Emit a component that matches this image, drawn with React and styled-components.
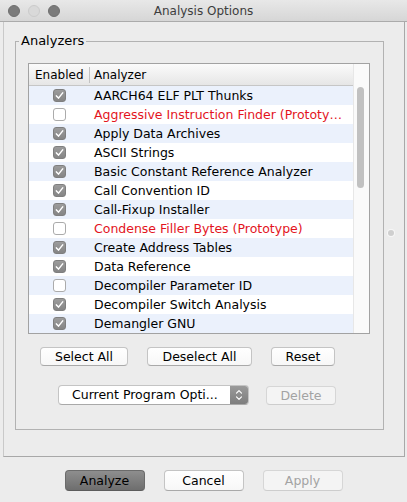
import React from 'react'
import styled, { createGlobalStyle } from 'styled-components'

const GlobalStyle = createGlobalStyle`
  html, body {
    margin: 0;
    padding: 0;
    background: #ececec;
  }
  body {
    font-family: "DejaVu Sans", "Noto Sans", sans-serif;
    color: #000;
  }
`

const analyzers = [
  { name: 'AARCH64 ELF PLT Thunks', enabled: true },
  { name: 'Aggressive Instruction Finder (Prototype)', enabled: false, proto: true },
  { name: 'Apply Data Archives', enabled: true },
  { name: 'ASCII Strings', enabled: true },
  { name: 'Basic Constant Reference Analyzer', enabled: true },
  { name: 'Call Convention ID', enabled: true },
  { name: 'Call-Fixup Installer', enabled: true },
  { name: 'Condense Filler Bytes (Prototype)', enabled: false, proto: true },
  { name: 'Create Address Tables', enabled: true },
  { name: 'Data Reference', enabled: true },
  { name: 'Decompiler Parameter ID', enabled: false },
  { name: 'Decompiler Switch Analysis', enabled: true },
  { name: 'Demangler GNU', enabled: true },
]

const Checkbox = ({ checked }) => (
  <Check $checked={checked}>
    {checked && (
      <svg width="13" height="13" viewBox="0 0 13 13">
        <path d="M3.4 6.9 L5.5 9.1 L9.7 3.9" fill="none" stroke="#fff" strokeWidth="1.5" strokeLinecap="round" strokeLinejoin="round" />
      </svg>
    )}
  </Check>
)

const App = () => {
  return (
    <Window>
      <GlobalStyle />
      <TitleBar>
        <Lights>
          <Light />
          <Light $light />
          <Light />
        </Lights>
        <Title>Analysis Options</Title>
        <span />
      </TitleBar>

      <Panel>
        <Group>
          <Legend>Analyzers</Legend>
          <TableBox>
            <TableMain>
              <HeaderRow>
                <HeaderCell $first>Enabled</HeaderCell>
                <HeaderCell>Analyzer</HeaderCell>
              </HeaderRow>
              {analyzers.map((a, i) => (
                <Row key={a.name} $odd={i % 2 === 1}>
                  <CheckCell>
                    <Checkbox checked={a.enabled} />
                  </CheckCell>
                  <NameCell $proto={a.proto}>{a.name}</NameCell>
                </Row>
              ))}
            </TableMain>
            <ScrollTrack>
              <Thumb />
            </ScrollTrack>
          </TableBox>

          <ButtonRow>
            <Button $width={88}>Select All</Button>
            <Button $width={105}>Deselect All</Button>
            <Button $width={64}>Reset</Button>
          </ButtonRow>

          <OptionsRow>
            <Select>
              <SelectText>Current Program Opti...</SelectText>
              <Stepper>
                <svg width="18" height="20" viewBox="0 0 18 20">
                  <path d="M6.5 8.2 L9 5.7 L11.5 8.2" fill="none" stroke="#fff" strokeWidth="1.2" strokeLinecap="round" strokeLinejoin="round" />
                  <path d="M6.5 11.8 L9 14.3 L11.5 11.8" fill="none" stroke="#fff" strokeWidth="1.2" strokeLinecap="round" strokeLinejoin="round" />
                </svg>
              </Stepper>
            </Select>
            <Button $width={70} disabled>Delete</Button>
          </OptionsRow>
        </Group>
        <Divider>
          <Handle />
        </Divider>
      </Panel>

      <Footer>
        <Button $width={80} $height={21} $default>Analyze</Button>
        <Button $width={80} $height={21}>Cancel</Button>
        <Button $width={80} $height={21} disabled>Apply</Button>
      </Footer>
    </Window>
  )
}

export default App

const Window = styled.div`
  width: 407px;
  height: 502px;
  display: flex;
  flex-direction: column;
  background: #ececec;
  overflow: hidden;
`

const TitleBar = styled.div`
  height: 21px;
  flex-shrink: 0;
  display: grid;
  grid-template-columns: 1fr auto 1fr;
  align-items: center;
  background: linear-gradient(#e8e8e8, #d6d6d6);
  border-bottom: 1px solid #ababab;
`

const Lights = styled.div`
  display: flex;
  gap: 8px;
  padding-left: 8px;
`

const Light = styled.div`
  width: 12px;
  height: 12px;
  border-radius: 50%;
  box-sizing: border-box;
  background: ${p => (p.$light ? '#d9d9d9' : '#7b7b7b')};
  border: 1px solid ${p => (p.$light ? '#cbcbcb' : '#6f6f6f')};
`

const Title = styled.div`
  font-size: 12px;
  color: #3d3d3d;
`

const Panel = styled.div`
  height: 435px;
  flex-shrink: 0;
  margin: 0 2px 0 3px;
  display: flex;
  border-left: 1px solid #c9c9c9;
  border-right: 1px solid #a8a8a8;
  border-bottom: 1px solid #a8a8a8;
  box-sizing: border-box;
`

const Group = styled.fieldset`
  width: 369px;
  height: 397px;
  box-sizing: border-box;
  margin: 11px 0 0 11px;
  padding: 14px 13px 0 12px;
  border: 1px solid #b2b2b2;
  min-width: 0;
`

const Legend = styled.legend`
  font-size: 13px;
  line-height: 16px;
  padding: 0 2px;
  margin-left: -9px;
  color: #000;
`

const TableBox = styled.div`
  height: 271px;
  box-sizing: border-box;
  border: 1px solid #a2a2a2;
  background: #fff;
  display: flex;
  overflow: hidden;
`

const TableMain = styled.div`
  width: 324px;
  display: flex;
  flex-direction: column;
`

const HeaderRow = styled.div`
  height: 21px;
  flex-shrink: 0;
  display: flex;
  align-items: center;
  background: linear-gradient(#fbfbfb, #e6e6e6);
  border-bottom: 1px solid #c6c6c6;
`

const HeaderCell = styled.div`
  font-size: 12px;
  line-height: 16px;
  padding-left: ${p => (p.$first ? '6px' : '4px')};
  width: ${p => (p.$first ? '61px' : 'auto')};
  box-sizing: border-box;
  border-right: ${p => (p.$first ? '1px solid #c2c2c2' : 'none')};
`

const Row = styled.div`
  height: 19px;
  flex-shrink: 0;
  display: flex;
  align-items: center;
  background: ${p => (p.$odd ? '#ffffff' : '#ebf1fc')};
`

const CheckCell = styled.div`
  width: 61px;
  display: flex;
  justify-content: center;
`

const Check = styled.div`
  width: 13px;
  height: 13px;
  box-sizing: border-box;
  border-radius: 3px;
  display: flex;
  align-items: center;
  justify-content: center;
  background: ${p => (p.$checked ? 'linear-gradient(#9c9c9c, #858585)' : '#fff')};
  border: 1px solid ${p => (p.$checked ? '#7f7f7f' : '#ababab')};
  svg {
    margin: -1px;
  }
`

const NameCell = styled.div`
  flex: 1;
  min-width: 0;
  padding: 0 4px;
  font-size: 12.5px;
  white-space: nowrap;
  overflow: hidden;
  text-overflow: ellipsis;
  color: ${p => (p.$proto ? '#e3141d' : '#000')};
`

const ScrollTrack = styled.div`
  flex: 1;
  display: flex;
  flex-direction: column;
  padding-top: 23px;
  background: #fafafa;
  border-left: 1px solid #e7e7e7;
`

const Thumb = styled.div`
  width: 7px;
  height: 101px;
  margin-left: 3px;
  border-radius: 4px;
  background: #c1c1c1;
`

const Button = styled.button`
  width: ${p => p.$width}px;
  height: ${p => p.$height || 19}px;
  box-sizing: border-box;
  padding: 0;
  font-family: "DejaVu Sans", "Noto Sans", sans-serif;
  font-size: 12.5px;
  border-radius: 4px;
  color: ${p => (p.disabled ? '#a3a3a3' : '#000')};
  background: ${p =>
    p.$default
      ? 'linear-gradient(#8e8e8e, #6e6e6e)'
      : p.disabled
      ? '#f4f4f4'
      : 'linear-gradient(#ffffff, #f7f7f7)'};
  border: 1px solid ${p => (p.$default ? '#6b6b6b' : p.disabled ? '#d6d6d6' : '#c4c4c4')};
  border-bottom-color: ${p => (p.$default ? '#5c5c5c' : p.disabled ? '#cdcdcd' : '#a9a9a9')};
`

const ButtonRow = styled.div`
  display: flex;
  gap: 19px;
  margin: 13px 0 0 12px;
`

const OptionsRow = styled.div`
  display: flex;
  align-items: center;
  gap: 17px;
  margin: 19px 0 0 30px;
`

const Select = styled.div`
  width: 191px;
  height: 20px;
  box-sizing: border-box;
  display: flex;
  border: 1px solid #c4c4c4;
  border-bottom-color: #a9a9a9;
  border-radius: 4px;
  background: #fff;
  overflow: hidden;
`

const SelectText = styled.div`
  flex: 1;
  padding-left: 13px;
  font-size: 12.5px;
  line-height: 18px;
  white-space: nowrap;
`

const Stepper = styled.div`
  width: 18px;
  display: flex;
  align-items: center;
  justify-content: center;
  background: linear-gradient(#9a9a9a, #7e7e7e);
`

const Divider = styled.div`
  flex: 1;
  display: flex;
  align-items: center;
  padding-left: 4px;
`

const Handle = styled.div`
  width: 6px;
  height: 6px;
  margin-bottom: 12px;
  border-radius: 50%;
  background: #cfcfcf;
  box-shadow: 0 0 0 1px #f7f7f7;
`

const Footer = styled.div`
  flex: 1;
  display: flex;
  justify-content: center;
  gap: 19px;
  padding-top: 13px;
`
